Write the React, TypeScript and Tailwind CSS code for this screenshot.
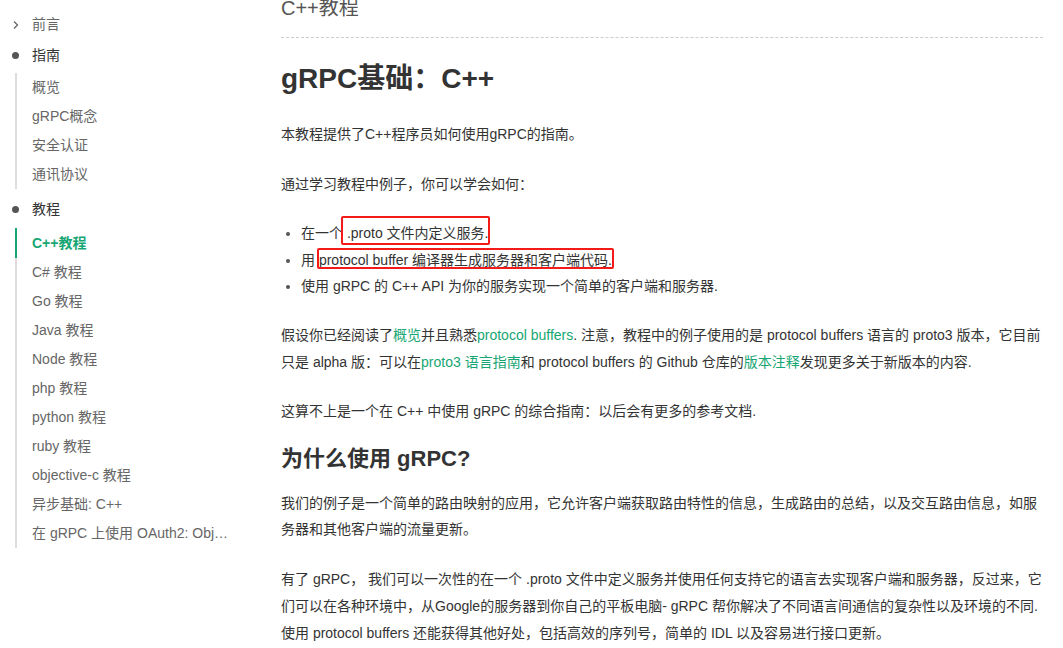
import React from 'react';

const font = 'font-["Liberation_Sans","Noto_Sans_CJK_SC",sans-serif]';

const guide = ['概览', 'gRPC概念', '安全认证', '通讯协议'];
const tutorials = [
  'C# 教程',
  'Go 教程',
  'Java 教程',
  'Node 教程',
  'php 教程',
  'python 教程',
  'ruby 教程',
  'objective-c 教程',
  '异步基础: C++',
  '在 gRPC 上使用 OAuth2: Objective-C',
];

function Link({ children }: { children: React.ReactNode }) {
  return <span className="text-[#17a673]">{children}</span>;
}

// red annotation frame drawn over the text
function Marked({ children, box }: { children: React.ReactNode; box: string }) {
  return (
    <span className="relative">
      {children}
      <span className={`pointer-events-none absolute rounded-[2px] border-[2.5px] border-[#f51a1a] ${box}`} />
    </span>
  );
}

function Sidebar() {
  return (
    <aside className="w-[250px] shrink-0 pt-[10px] text-[14px] text-[#666]">
      {/* 前言 */}
      <div className="flex h-[29px] items-center">
        <span className="flex w-[32px] justify-start pl-[12px]">
          <svg viewBox="0 0 8 10" className="h-[10px] w-[8px]">
            <polyline points="2,1.5 5.5,5 2,8.5" fill="none" stroke="#666" strokeWidth="1.3" />
          </svg>
        </span>
        <span>前言</span>
      </div>

      {/* 指南 */}
      <div className="mt-[2px] flex h-[29px] items-center text-[#333]">
        <span className="flex w-[32px] pl-[12px]">
          <span className="h-[7px] w-[7px] rounded-full bg-[#555]" />
        </span>
        <span>指南</span>
      </div>
      <div className="ml-[15px] mt-[3px] w-[220px] border-l-2 border-[#ddd]">
        {guide.map((g) => (
          <div key={g} className="flex h-[29px] items-center pl-[15px]">
            {g}
          </div>
        ))}
      </div>

      {/* 教程 */}
      <div className="mt-[6px] flex h-[29px] items-center text-[#333]">
        <span className="flex w-[32px] pl-[12px]">
          <span className="h-[7px] w-[7px] rounded-full bg-[#555]" />
        </span>
        <span>教程</span>
      </div>
      <div className="ml-[15px] mt-[4px] w-[218px] border-l-2 border-[#ddd]">
        <div className="-ml-[2px] flex h-[30px] items-center border-l-2 border-[#17a673] pl-[15px] font-bold text-[#17a673]">
          C++教程
        </div>
        {tutorials.map((t) => (
          <div key={t} className="flex h-[29px] items-center pl-[15px]">
            <span className="truncate">{t}</span>
          </div>
        ))}
      </div>
    </aside>
  );
}

export default function App() {
  return (
    <div className={`flex h-[648px] w-[1063px] overflow-hidden bg-white ${font}`}>
      <Sidebar />

      <main className="ml-[31px] w-[762px] text-[14px] leading-[26.5px] text-[#333]">
        <div className="-mt-[2px] border-b border-dashed border-[#ccc] pb-[19px] text-[20px] leading-[20px] text-[#555]">
          C++教程
        </div>

        <h1 className="mt-[23px] text-[28px] font-bold leading-[36px] text-[#333]">gRPC基础：C++</h1>

        <p className="mt-[24px]">本教程提供了C++程序员如何使用gRPC的指南。</p>

        <p className="mt-[23.5px]">通过学习教程中例子，你可以学会如何：</p>

        <ul className="mt-[22.5px] list-disc pl-[20px] marker:text-[#555]">
          <li>
            在一个
            <Marked box="-left-[2px] -right-[2px] -top-[9px] -bottom-[4px]"> .proto 文件内定义服务.</Marked>
          </li>
          <li>
            用{' '}
            <Marked box="-left-[2px] -right-[2px] -top-[4px] -bottom-[1px]">protocol buffer 编译器生成服务器和客户端代码.</Marked>
          </li>
          <li>使用 gRPC 的 C++ API 为你的服务实现一个简单的客户端和服务器.</li>
        </ul>

        <p className="mt-[22.5px]">
          假设你已经阅读了<Link>概览</Link>并且熟悉<Link>protocol buffers</Link>. 注意，教程中的例子使用的是 protocol
          buffers 语言的 proto3 版本，它目前只是 alpha 版：可以在<Link>proto3 语言指南</Link>和 protocol buffers 的
          Github 仓库的<Link>版本注释</Link>发现更多关于新版本的内容.
        </p>

        <p className="mt-[23px]">这算不上是一个在 C++ 中使用 gRPC 的综合指南：以后会有更多的参考文档.</p>

        <h2 className="mt-[19px] text-[22px] font-bold leading-[30px] text-[#333]">为什么使用 gRPC?</h2>

        <p className="mt-[16px]">
          我们的例子是一个简单的路由映射的应用，它允许客户端获取路由特性的信息，生成路由的总结，以及交互路由信息，如服务器和其他客户端的流量更新。
        </p>

        <p className="mt-[23.5px] leading-[27px]">
          有了 gRPC， 我们可以一次性的在一个 .proto 文件中定义服务并使用任何支持它的语言去实现客户端和服务器，反过来，它们可以在各种环境中，从Google的服务器到你自己的平板电脑-
          gRPC 帮你解决了不同语言间通信的复杂性以及环境的不同. 使用 protocol buffers 还能获得其他好处，包括高效的序列号，简单的 IDL
          以及容易进行接口更新。
        </p>
      </main>
    </div>
  );
}
